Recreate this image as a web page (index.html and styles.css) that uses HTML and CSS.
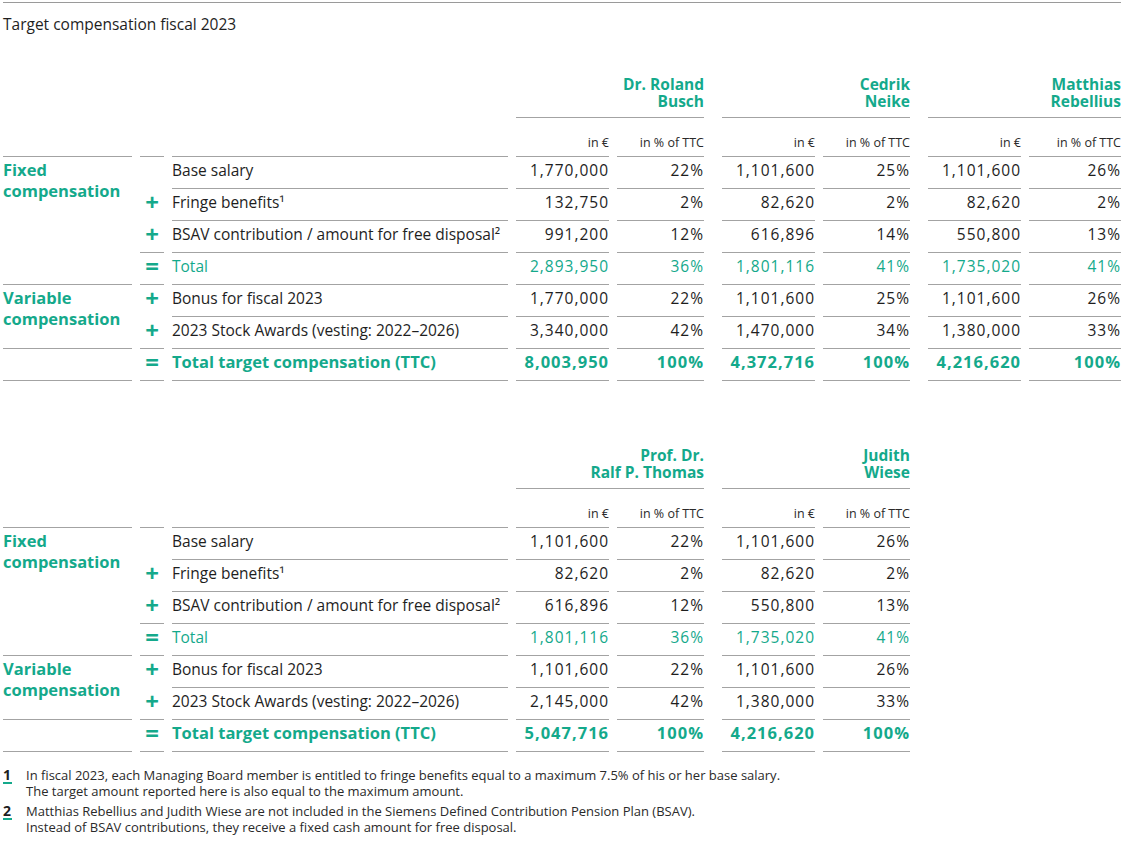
FILE: index.html
```html
<!DOCTYPE html>
<html lang="en">
<head>
<meta charset="utf-8">
<title>Target compensation fiscal 2023</title>
<link rel="stylesheet" href="styles.css">
</head>
<body>
<div class="page">
  <h1 class="title">Target compensation fiscal 2023</h1>

  <div class="grid grid3">
    <div class="blank"></div><div class="blank"></div><div class="blank"></div>
    <div class="name span2">Dr. Roland<br>Busch</div>
    <div class="name span2 grp">Cedrik<br>Neike</div>
    <div class="name span2 grp">Matthias<br>Rebellius</div>

    <div class="sub"></div><div class="sub"></div><div class="sub"></div>
    <div class="sub num">in €</div><div class="sub num">in % of TTC</div>
    <div class="sub num grp">in €</div><div class="sub num">in % of TTC</div>
    <div class="sub num grp">in €</div><div class="sub num">in % of TTC</div>

    <div class="lab span4">Fixed<br>compensation</div>
    <div class="sym nb"></div><div class="cell">Base salary</div>
    <div class="cell num">1,770,000</div><div class="cell num">22%</div>
    <div class="cell num grp">1,101,600</div><div class="cell num">25%</div>
    <div class="cell num grp">1,101,600</div><div class="cell num">26%</div>

    <div class="sym nb">+</div><div class="cell">Fringe benefits¹</div>
    <div class="cell num">132,750</div><div class="cell num">2%</div>
    <div class="cell num grp">82,620</div><div class="cell num">2%</div>
    <div class="cell num grp">82,620</div><div class="cell num">2%</div>

    <div class="sym">+</div><div class="cell">BSAV contribution / amount for free disposal²</div>
    <div class="cell num">991,200</div><div class="cell num">12%</div>
    <div class="cell num grp">616,896</div><div class="cell num">14%</div>
    <div class="cell num grp">550,800</div><div class="cell num">13%</div>

    <div class="sym">=</div><div class="cell green">Total</div>
    <div class="cell num green">2,893,950</div><div class="cell num green">36%</div>
    <div class="cell num green grp">1,801,116</div><div class="cell num green">41%</div>
    <div class="cell num green grp">1,735,020</div><div class="cell num green">41%</div>

    <div class="lab span2r">Variable<br>compensation</div>
    <div class="sym nb">+</div><div class="cell">Bonus for fiscal 2023</div>
    <div class="cell num">1,770,000</div><div class="cell num">22%</div>
    <div class="cell num grp">1,101,600</div><div class="cell num">25%</div>
    <div class="cell num grp">1,101,600</div><div class="cell num">26%</div>

    <div class="sym">+</div><div class="cell">2023 Stock Awards (vesting: 2022–2026)</div>
    <div class="cell num">3,340,000</div><div class="cell num">42%</div>
    <div class="cell num grp">1,470,000</div><div class="cell num">34%</div>
    <div class="cell num grp">1,380,000</div><div class="cell num">33%</div>

    <div class="lab"></div>
    <div class="sym">=</div><div class="cell total">Total target compensation (TTC)</div>
    <div class="cell num total">8,003,950</div><div class="cell num total">100%</div>
    <div class="cell num total grp">4,372,716</div><div class="cell num total">100%</div>
    <div class="cell num total grp">4,216,620</div><div class="cell num total">100%</div>
  </div>

  <div class="grid grid2">
    <div class="blank"></div><div class="blank"></div><div class="blank"></div>
    <div class="name span2">Prof. Dr.<br>Ralf P. Thomas</div>
    <div class="name span2 grp">Judith<br>Wiese</div>

    <div class="sub"></div><div class="sub"></div><div class="sub"></div>
    <div class="sub num">in €</div><div class="sub num">in % of TTC</div>
    <div class="sub num grp">in €</div><div class="sub num">in % of TTC</div>

    <div class="lab span4">Fixed<br>compensation</div>
    <div class="sym nb"></div><div class="cell">Base salary</div>
    <div class="cell num">1,101,600</div><div class="cell num">22%</div>
    <div class="cell num grp">1,101,600</div><div class="cell num">26%</div>

    <div class="sym nb">+</div><div class="cell">Fringe benefits¹</div>
    <div class="cell num">82,620</div><div class="cell num">2%</div>
    <div class="cell num grp">82,620</div><div class="cell num">2%</div>

    <div class="sym">+</div><div class="cell">BSAV contribution / amount for free disposal²</div>
    <div class="cell num">616,896</div><div class="cell num">12%</div>
    <div class="cell num grp">550,800</div><div class="cell num">13%</div>

    <div class="sym">=</div><div class="cell green">Total</div>
    <div class="cell num green">1,801,116</div><div class="cell num green">36%</div>
    <div class="cell num green grp">1,735,020</div><div class="cell num green">41%</div>

    <div class="lab span2r">Variable<br>compensation</div>
    <div class="sym nb">+</div><div class="cell">Bonus for fiscal 2023</div>
    <div class="cell num">1,101,600</div><div class="cell num">22%</div>
    <div class="cell num grp">1,101,600</div><div class="cell num">26%</div>

    <div class="sym">+</div><div class="cell">2023 Stock Awards (vesting: 2022–2026)</div>
    <div class="cell num">2,145,000</div><div class="cell num">42%</div>
    <div class="cell num grp">1,380,000</div><div class="cell num">33%</div>

    <div class="lab"></div>
    <div class="sym">=</div><div class="cell total">Total target compensation (TTC)</div>
    <div class="cell num total">5,047,716</div><div class="cell num total">100%</div>
    <div class="cell num total grp">4,216,620</div><div class="cell num total">100%</div>
  </div>

  <div class="notes">
    <div class="note">
      <span class="note-no">1</span>
      <p class="note-text">In fiscal 2023, each Managing Board member is entitled to fringe benefits equal to a maximum 7.5% of his or her base salary.<br>The target amount reported here is also equal to the maximum amount.</p>
    </div>
    <div class="note">
      <span class="note-no">2</span>
      <p class="note-text">Matthias Rebellius and Judith Wiese are not included in the Siemens Defined Contribution Pension Plan (BSAV).<br>Instead of BSAV contributions, they receive a fixed cash amount for free disposal.</p>
    </div>
  </div>
</div>
</body>
</html>
```

FILE: styles.css
```css
html, body {
  margin: 0;
  padding: 0;
  background: #ffffff;
}

body {
  font-family: "Open Sans", "Noto Sans", sans-serif;
  color: #1e1e1e;
}

.page {
  width: 1118px;
  margin: 2px 0 0 3px;
  border-top: 1px solid #9a9a9a;
}

.title {
  margin: 0;
  padding-top: 10px;
  font-size: 15.5px;
  font-weight: 400;
  line-height: 22px;
}

.grid {
  display: grid;
  column-gap: 8px;
}

.grid3 {
  margin-top: 41px;
  grid-template-columns: 129px 24px 336px 93px 87px 103px 87px 103px 92px;
}

.grid2 {
  margin-top: 66px;
  grid-template-columns: 129px 24px 336px 93px 87px 103px 87px;
}

.grp {
  margin-left: 10px;
}

.span2 {
  grid-column: span 2;
}

.span4 {
  grid-row: span 4;
}

.span2r {
  grid-row: span 2;
}

.name {
  padding-bottom: 7px;
  border-bottom: 1px solid #a3a3a3;
  text-align: right;
  font-size: 15.5px;
  font-weight: 700;
  line-height: 17px;
  color: #14a98b;
}

.sub {
  padding: 16px 0 5px;
  border-bottom: 1px solid #a3a3a3;
  font-size: 12.5px;
  line-height: 17px;
  color: #2a2a2a;
}

.num {
  text-align: right;
}

.cell.num {
  letter-spacing: 1px;
}

.lab {
  padding: 2px 0 7px;
  border-bottom: 1px solid #a3a3a3;
  font-size: 16.5px;
  font-weight: 700;
  line-height: 21px;
  color: #14a98b;
}

.sym {
  padding: 2px 0 7px;
  border-bottom: 1px solid #a3a3a3;
  text-align: center;
  font-size: 24px;
  font-weight: 700;
  line-height: 22px;
  color: #14a98b;
}

.sym.nb {
  border-bottom-color: transparent;
}

.cell {
  padding: 2px 0 7px;
  border-bottom: 1px solid #a3a3a3;
  font-size: 15.5px;
  line-height: 22px;
  white-space: nowrap;
}

.green {
  color: #14a98b;
}

.total {
  color: #14a98b;
  font-weight: 700;
  font-size: 16.5px;
}

.notes {
  margin-top: 15px;
}

.note {
  display: flex;
  align-items: flex-start;
}

.note + .note {
  margin-top: 4px;
}

.note-no {
  flex: 0 0 23px;
  font-size: 14px;
  font-weight: 700;
  line-height: 16px;
}

.note-no::after {
  content: "";
  display: block;
  width: 9px;
  height: 2px;
  margin-top: -1px;
  background: #14a98b;
}

.note-text {
  margin: 0;
  font-size: 13px;
  line-height: 16px;
  color: #2a2a2a;
}
```
